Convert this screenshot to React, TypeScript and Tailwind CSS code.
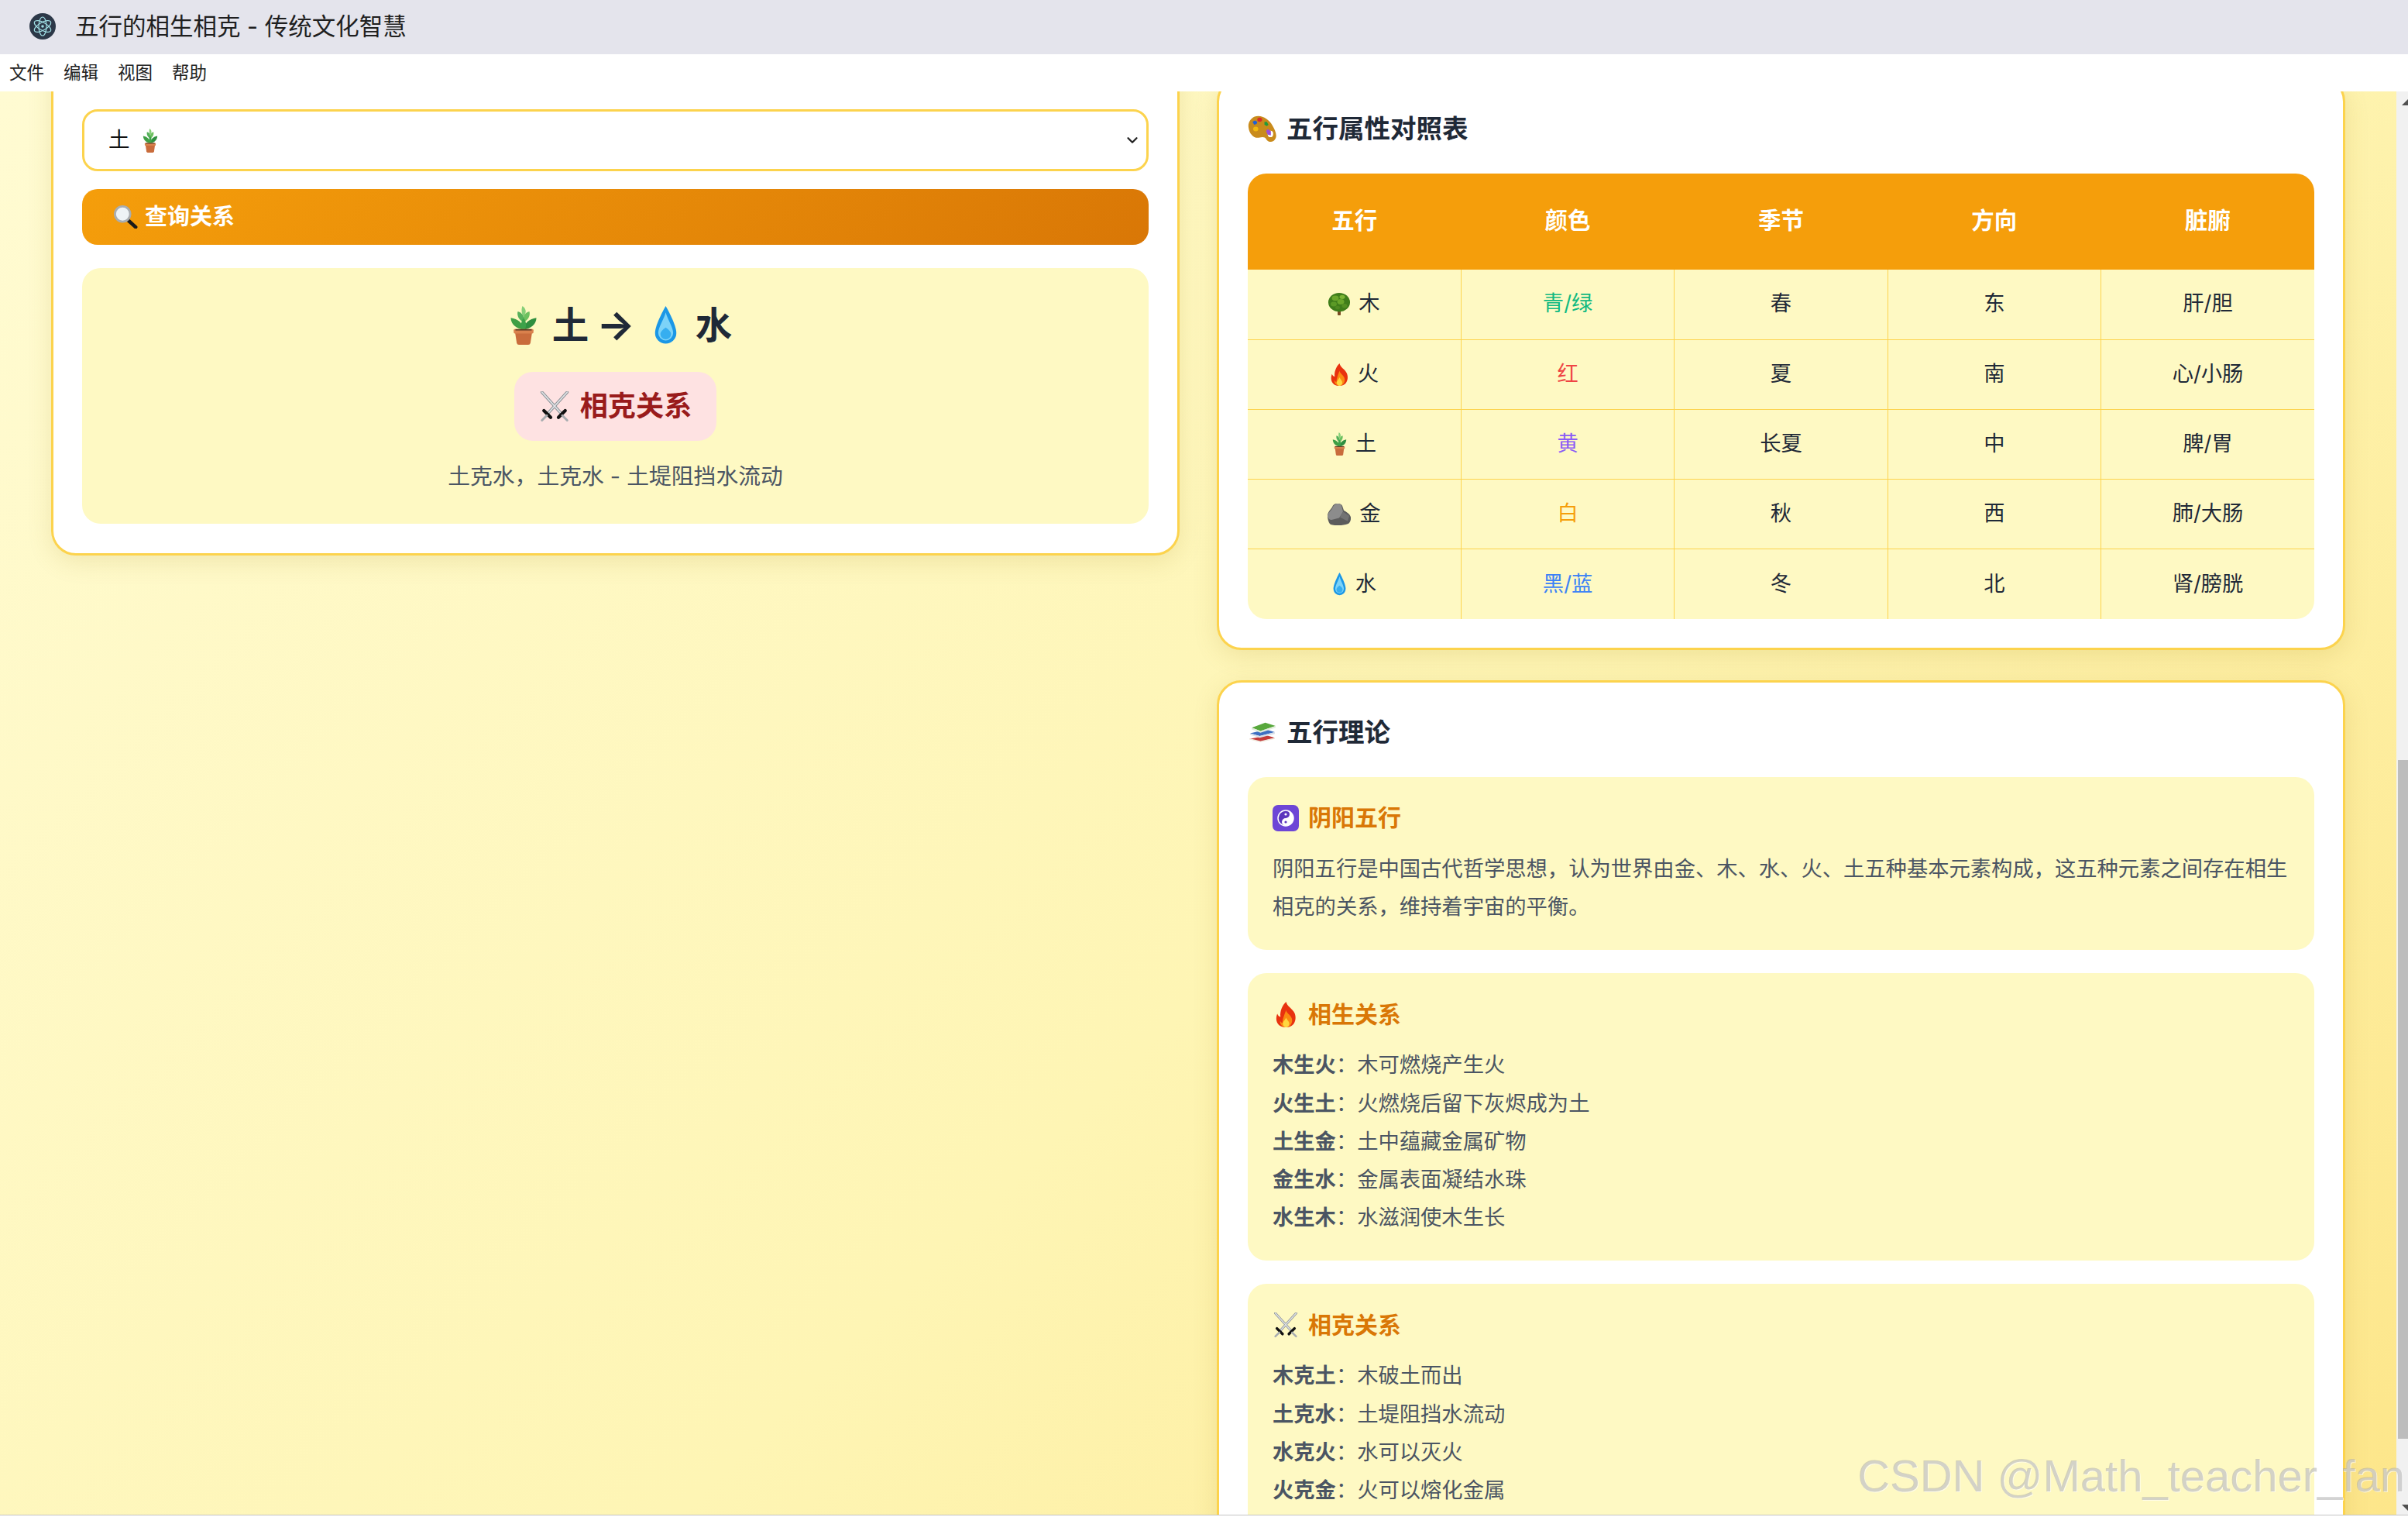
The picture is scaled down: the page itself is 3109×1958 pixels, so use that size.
import { ChevronDown } from 'lucide-react';
import type { ReactNode } from 'react';

type IconProps = { className?: string };

const ElectronLogo = () => (
  <svg viewBox="0 0 34 34" className="h-[34px] w-[34px]">
    <circle cx="17" cy="17" r="17" fill="#2c3848" />
    <g fill="none" stroke="#9fdde3" strokeWidth="1.2">
      <ellipse cx="17" cy="17" rx="12" ry="5" transform="rotate(30 17 17)" />
      <ellipse cx="17" cy="17" rx="12" ry="5" transform="rotate(90 17 17)" />
      <ellipse cx="17" cy="17" rx="12" ry="5" transform="rotate(150 17 17)" />
    </g>
    <circle cx="17" cy="17" r="1.8" fill="#9fdde3" />
  </svg>
);

const Plant = ({ className }: IconProps) => (
  <svg viewBox="0 0 24 36" preserveAspectRatio="none" className={className}>
    <path d="M12 10C10 7 10 3 11 0c3 2 4 6 1 10z" fill="#86cf78" />
    <path d="M12 15C8 13 6 9 7 5c4 1 6 5 5 10z" fill="#55b05a" />
    <path d="M12 15c4-2 6-6 5-10-4 1-6 5-5 10z" fill="#6cc05f" />
    <path d="M11.5 22C6 21 1 17 1 11c6 1 11 5 10.500 11z" fill="#3f9f45" />
    <path d="M12.5 22c5.500-1 10.500-5 10.500-11-6 1-11 5-10.500 11z" fill="#2f8f3f" />
    <path d="M11 22C9 18 10 14 12 11c2 3 3 7 1 11z" fill="#3da24a" />
    <path d="M4.600 24h14.800l-1.500 10.400A2 2 0 0 1 16 36H8a2 2 0 0 1-1.900-1.600z" fill="#c96c3c" />
    <rect x="3.500" y="21.500" width="17" height="4" rx="1" fill="#d9814d" />
    <rect x="5" y="21.500" width="14" height="1.200" fill="#5c3a22" />
  </svg>
);

const Drop = ({ className }: IconProps) => (
  <svg viewBox="0 0 24 36" preserveAspectRatio="none" className={className}>
    <path d="M12 0C12 0 2 17 2 25a10 10 0 0 0 20 0C22 17 12 0 12 0z" fill="#1b97e6" />
    <path d="M12 6C10 13 5 20 5 25a7 7 0 0 0 14 0C19 20 14 13 12 6z" fill="#7dd3f8" />
    <path d="M12 20c-3 2-5 4-5 6a5 5 0 0 0 10 0c0-2-2-4-5-6z" fill="#36aef0" />
  </svg>
);

const Flame = ({ className }: IconProps) => (
  <svg viewBox="0 0 28 34" preserveAspectRatio="none" className={className}>
    <path d="M14 0c1 6 8 9 10.500 15 3 7 1 19-10.500 19S0 24 3 16c1 2 2 4 4 4-1-7 2-15 7-20z" fill="#e8320f" />
    <path d="M14 11c0 4 7 7 7.500 13 .4 5-3 10-7.500 10s-8-4-7.500-9c.5 2 2 3 3 3 0-6 3-12 4.500-17z" fill="#fb8a12" />
    <path d="M14 21c1 3 4 5 4 8 0 3-2 5-4 5s-4-2-4-5c0-3 3-5 4-8z" fill="#ffd740" />
  </svg>
);

const Tree = ({ className }: IconProps) => (
  <svg viewBox="0 0 28 38" preserveAspectRatio="none" className={className}>
    <rect x="12" y="28" width="4" height="10" rx="1" fill="#7a4a21" />
    <ellipse cx="14" cy="16" rx="14" ry="16" fill="#3f7d1a" />
    <circle cx="9" cy="9" r="4.500" fill="#6aa62b" />
    <circle cx="18" cy="7" r="3.500" fill="#7db534" />
    <circle cx="7" cy="19" r="4" fill="#5b9a26" />
    <circle cx="16" cy="15" r="4.500" fill="#6aa62b" />
    <circle cx="21" cy="22" r="3.500" fill="#548f22" />
    <circle cx="12" cy="25" r="3" fill="#4f8a20" />
  </svg>
);

const Rock = ({ className }: IconProps) => (
  <svg viewBox="0 0 30 32" preserveAspectRatio="none" className={className}>
    <path d="M12 0c3-.5 6 1 7 3l2 7c3 2 8 5 9 10 .5 4-1 9-4 10-3 1.500-7 2-12 2-4 0-9 0-11-2-2-3-3-8-3-12 0-6 4-9 6-13 1-3 3-5 6-5z" fill="#5c5c5c" />
    <path d="M12 0c3-.5 5 1 6 3l2 9-5 9-10 3c-2 0-4-2-5-5 0-5 4-8 6-12 1-3 3-6 6-7z" fill="#8c8c8c" />
    <path d="M20 12l8 6-2 8-10-6z" fill="#737373" />
  </svg>
);

const Swords = ({ className }: IconProps) => (
  <svg viewBox="0 0 32 32" className={className}>
    <g strokeLinecap="round">
      <path d="M29 1L9 23" stroke="#8d9398" strokeWidth="3" />
      <path d="M3 1l20 22" stroke="#8d9398" strokeWidth="3" />
      <path d="M29 1L9 23" stroke="#dfe2e5" strokeWidth="1.400" />
      <path d="M3 1l20 22" stroke="#dfe2e5" strokeWidth="1.400" />
      <path d="M5 20l7 7M27 20l-7 7" stroke="#111111" strokeWidth="3.400" />
      <path d="M8 25l-5 5M24 25l5 5" stroke="#a7acb0" strokeWidth="2.400" />
    </g>
  </svg>
);

const Palette = ({ className }: IconProps) => (
  <svg viewBox="0 0 36 38" preserveAspectRatio="none" className={className}>
    <path d="M8 2C16-2 26 4 31 14c3 6 7 14 3 20-3 5-9 3-11-1-1-3-5-3-8-2C8 33 2 26 1 17 0 11 3 5 8 2z" fill="#c98b1c" />
    <path d="M25 26a3.500 4.500 0 1 0 7 0 3.500 4.500 0 1 0-7 0z" fill="#ffffff" />
    <path d="M6 9l3-2 3 2-1 3-3 1z" fill="#1f5fd6" />
    <circle cx="15" cy="6" r="3" fill="#d92b2b" />
    <path d="M21 9l3 0 2 4-2 2-3-2z" fill="#1f9a3a" />
    <circle cx="10" cy="19" r="3.200" fill="#f3b90f" />
    <path d="M25 19l4 3 0 6-4-1-2-5z" fill="#9a4fd6" />
  </svg>
);

const Books = ({ className }: IconProps) => (
  <svg viewBox="0 0 36 36" preserveAspectRatio="none" className={className}>
    <path d="M2 30l22-6 10 4-18 7z" fill="#c43a3a" />
    <path d="M2 29l14 5 18-6v2l-18 6-14-5z" fill="#efe8dc" />
    <path d="M3 20l20-7 11 5-19 7z" fill="#3d6fc2" />
    <path d="M3 20l12 5 19-7v3l-19 7-12-5z" fill="#d8dfe8" />
    <path d="M5 10L22 1l13 6-19 9z" fill="#58a83c" />
    <path d="M5 10l11 6 19-9v3l-19 9-11-6z" fill="#e4eedd" />
  </svg>
);

const YinYang = ({ className }: IconProps) => (
  <svg viewBox="0 0 34 34" className={className}>
    <rect width="34" height="34" rx="7" fill="#6d46d6" />
    <circle cx="17" cy="17" r="10" fill="#5b36bd" stroke="#ffffff" strokeWidth="1.500" />
    <path d="M17 7a10 10 0 0 1 0 20 5 5 0 0 1 0-10 5 5 0 0 0 0-10z" fill="#ffffff" />
    <circle cx="17" cy="12" r="1.600" fill="#ffffff" />
    <circle cx="17" cy="22" r="1.600" fill="#5b36bd" />
  </svg>
);

const Magnifier = ({ className }: IconProps) => (
  <svg viewBox="0 0 34 32" className={className}>
    <path d="M20 20l11 10" stroke="#1a1a1a" strokeWidth="5" strokeLinecap="round" />
    <circle cx="13" cy="12" r="10.500" fill="#eef3f5" stroke="#a9adb0" strokeWidth="3" />
  </svg>
);

const rows: { icon: ReactNode; el: string; color: string; tone: string; season: string; dir: string; organ: string }[] = [
  { icon: <Tree className="h-[29px] w-[28px]" />, el: '木', color: '青/绿', tone: 'text-[#10b981]', season: '春', dir: '东', organ: '肝/胆' },
  { icon: <Flame className="h-[29px] w-[25px]" />, el: '火', color: '红', tone: 'text-[#ef4444]', season: '夏', dir: '南', organ: '心/小肠' },
  { icon: <Plant className="h-[30px] w-[19px]" />, el: '土', color: '黄', tone: 'text-[#8b5cf6]', season: '长夏', dir: '中', organ: '脾/胃' },
  { icon: <Rock className="h-[28px] w-[30px]" />, el: '金', color: '白', tone: 'text-[#f59e0b]', season: '秋', dir: '西', organ: '肺/大肠' },
  { icon: <Drop className="h-[30px] w-[19px]" />, el: '水', color: '黑/蓝', tone: 'text-[#3b82f6]', season: '冬', dir: '北', organ: '肾/膀胱' },
];

const shengLines = [
  ['木生火', '木可燃烧产生火'],
  ['火生土', '火燃烧后留下灰烬成为土'],
  ['土生金', '土中蕴藏金属矿物'],
  ['金生水', '金属表面凝结水珠'],
  ['水生木', '水滋润使木生长'],
];

const keLines = [
  ['木克土', '木破土而出'],
  ['土克水', '土堤阻挡水流动'],
  ['水克火', '水可以灭火'],
  ['火克金', '火可以熔化金属'],
];

const Heading = ({ icon, children }: { icon: ReactNode; children: ReactNode }) => (
  <h2 className="mb-[31px] flex h-[54px] items-center gap-[13px] text-[33.500px] font-bold text-[#1f2937]">
    {icon}
    {children}
  </h2>
);

const TheoryBox = ({ icon, title, children }: { icon: ReactNode; title: string; children: ReactNode }) => (
  <div className="rounded-[24px] bg-[#fef9c3] px-[32px] pb-[31px] pt-[32px]">
    <h3 className="mb-[20px] flex h-[42px] items-center gap-[12px] text-[30px] font-bold text-[#d97706]">
      <span className="flex w-[34px] justify-center">{icon}</span>
      {title}
    </h3>
    {children}
  </div>
);

const RelationList = ({ lines }: { lines: string[][] }) => (
  <ul className="text-[27.300px] leading-[49.200px] text-[#4b5563]">
    {lines.map(([name, text]) => (
      <li key={name}>
        <strong className="font-bold">{name}</strong>：{text}
      </li>
    ))}
  </ul>
);

export default function App() {
  return (
    <div className="flex h-screen w-screen flex-col overflow-hidden bg-white [font-family:Inter,'Noto_Sans_CJK_SC',sans-serif]">
      <div className="flex h-[70px] shrink-0 items-center gap-[25px] bg-[#e4e4ec] pb-[2px] pl-[38px] text-[30.500px] text-[#1f1f1f]">
        <ElectronLogo />
        <span>五行的相生相克 - 传统文化智慧</span>
      </div>
      <div className="flex h-[48px] shrink-0 items-center gap-[25px] bg-white pl-[12px] text-[22.500px] text-[#222222]">
        <span>文件</span>
        <span>编辑</span>
        <span>视图</span>
        <span>帮助</span>
      </div>

      <div className="relative flex min-h-0 flex-1">
        <main className="min-w-0 flex-1 overflow-hidden bg-[linear-gradient(135deg,#fffbd2_0%,#fef5b4_55%,#fde68a_100%)] pl-[66px] pr-[66px]">
          <div className="-mt-[19px] grid grid-cols-2 items-start gap-x-[48px]">
            <section className="-mt-[46px] rounded-[32px] border-[3px] border-[#fcd34d] bg-white px-[37px] pb-[38px] pt-[85px] shadow-[0_8px_32px_rgba(150,120,0,0.14)]">
              <div className="flex h-[80px] items-center justify-between rounded-[20px] border-[3px] border-[#fcd34d] bg-white pl-[31px] pr-[7px] text-[27.500px] text-[#111111]">
                <span className="flex items-center gap-[16px]">
                  土 <Plant className="h-[31px] w-[20px]" />
                </span>
                <ChevronDown className="h-[22px] w-[22px] text-[#222222]" strokeWidth={2.500} />
              </div>
              <button className="mt-[23px] flex h-[72px] w-full items-center gap-[8px] rounded-[20px] bg-[linear-gradient(135deg,#f59e0b,#d97706)] pl-[39px] text-[29px] font-semibold text-white">
                <Magnifier className="h-[30px] w-[34px]" />
                查询关系
              </button>
              <div className="mt-[30px] flex flex-col items-center rounded-[24px] bg-[#fef9c3] pb-[39px] pt-[44px]">
                <div className="flex h-[60px] items-center pl-[8px] text-[47.500px] font-bold text-[#1f2937]">
                  <span className="flex w-[48px] justify-center">
                    <Plant className="h-[50px] w-[36px]" />
                  </span>
                  <span className="ml-[13px]">土</span>
                  <span className="ml-[10px] text-[52px]">→</span>
                  <span className="ml-[16px] flex w-[48px] justify-center">
                    <Drop className="h-[50px] w-[33px]" />
                  </span>
                  <span className="ml-[14px]">水</span>
                </div>
                <div className="mt-[30px] flex h-[89px] items-center gap-[13px] rounded-[24px] bg-[#fee2e2] px-[32px] text-[36.200px] font-bold text-[#991b1b]">
                  <Swords className="h-[40px] w-[40px]" />
                  相克关系
                </div>
                <p className="mt-[24px] text-[28.800px] leading-[44px] text-[#4b5563]">土克水，土克水 - 土堤阻挡水流动</p>
              </div>
            </section>

            <div className="flex flex-col gap-[39px]">
              <section className="rounded-[32px] border-[3px] border-[#fcd34d] bg-white p-[37px] shadow-[0_8px_32px_rgba(150,120,0,0.14)]">
                <Heading icon={<Palette className="h-[35px] w-[37px]" />}>五行属性对照表</Heading>
                <div className="overflow-hidden rounded-[24px]">
                  <table className="w-full table-fixed border-collapse text-center text-[27.300px] text-[#1f2937]">
                    <thead>
                      <tr className="h-[124px] bg-[#f59e0b] text-[29.500px] font-bold text-white">
                        <th className="pb-[3px]">五行</th>
                        <th className="pb-[3px]">颜色</th>
                        <th className="pb-[3px]">季节</th>
                        <th className="pb-[3px]">方向</th>
                        <th className="pb-[3px]">脏腑</th>
                      </tr>
                    </thead>
                    <tbody className="bg-[#fef9c3]">
                      {rows.map((row) => (
                        <tr key={row.el} className="h-[90.200px] border-b border-[#fcd34d] last:border-b-0">
                          <td className="border-r border-[#fcd34d]">
                            <span className="flex items-center justify-center gap-[11px]">
                              {row.icon}
                              {row.el}
                            </span>
                          </td>
                          <td className={`border-r border-[#fcd34d] ${row.tone}`}>{row.color}</td>
                          <td className="border-r border-[#fcd34d]">{row.season}</td>
                          <td className="border-r border-[#fcd34d]">{row.dir}</td>
                          <td>{row.organ}</td>
                        </tr>
                      ))}
                    </tbody>
                  </table>
                </div>
              </section>

              <section className="rounded-[32px] border-[3px] border-[#fcd34d] bg-white p-[37px] shadow-[0_8px_32px_rgba(150,120,0,0.14)]">
                <Heading icon={<Books className="h-[26px] w-[37px]" />}>五行理论</Heading>
                <div className="flex flex-col gap-[30px]">
                  <TheoryBox icon={<YinYang className="h-[34px] w-[34px]" />} title="阴阳五行">
                    <p className="text-[27.300px] leading-[49.200px] text-[#4b5563]">
                      阴阳五行是中国古代哲学思想，认为世界由金、木、水、火、土五种基本元素构成，这五种元素之间存在相生相克的关系，维持着宇宙的平衡。
                    </p>
                  </TheoryBox>
                  <TheoryBox icon={<Flame className="h-[33px] w-[29px]" />} title="相生关系">
                    <RelationList lines={shengLines} />
                  </TheoryBox>
                  <TheoryBox icon={<Swords className="h-[33px] w-[34px]" />} title="相克关系">
                    <RelationList lines={keLines} />
                  </TheoryBox>
                </div>
              </section>
            </div>
          </div>
        </main>

        <div className="flex w-[15px] shrink-0 flex-col items-end bg-[#f1f1f1] pb-[5px] pt-[10px]">
          <svg viewBox="0 0 8 8" className="h-[8px] w-[8px]">
            <path d="M0 8h8V0z" fill="#505050" />
          </svg>
          <div className="mb-[85px] mt-auto h-[876px] w-[13px] bg-[#bdbdbd]" />
          <svg viewBox="0 0 8 8" className="h-[8px] w-[8px]">
            <path d="M0 0h8v8z" fill="#505050" />
          </svg>
        </div>

        <span className="absolute bottom-[15px] right-[4px] text-[58px] leading-[70px] text-[#a8a8a8]/50 [font-family:'Liberation_Sans',sans-serif] [text-shadow:1px_1px_0_rgba(255,255,255,0.6)]">
          CSDN @Math_teacher_fan
        </span>
      </div>

      <div className="h-[3px] shrink-0 border-t border-[#c4c4c4] bg-white" />
    </div>
  );
}
